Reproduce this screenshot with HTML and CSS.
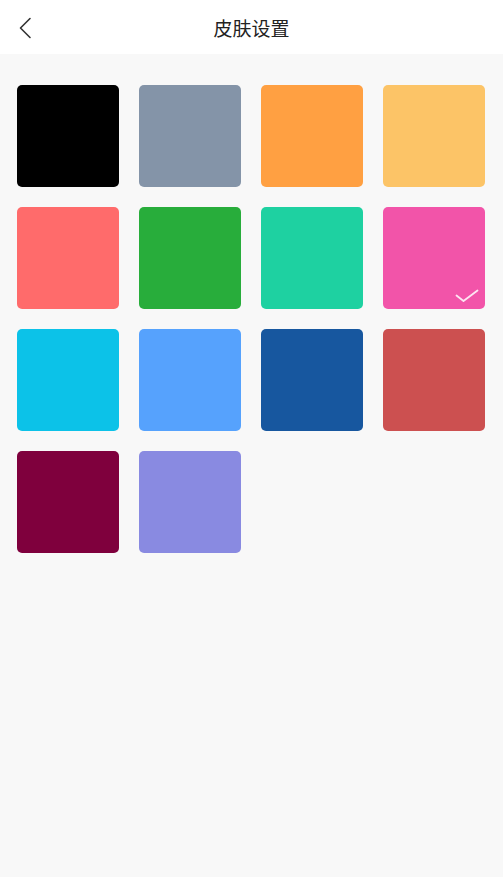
FILE: index.html
```html
<!DOCTYPE html>
<html lang="zh-CN">
<head>
    <meta charset="UTF-8">
    <meta name="viewport" content="width=device-width, initial-scale=1.0">
    <title>皮肤设置</title>
    <link rel="stylesheet" href="styles.css">
</head>
<body>
    <div class="navbar">
        <a href="#" class="back">
            <svg width="14" height="22" viewBox="0 0 14 22">
                <path d="M12 1.5 L2.5 11 L12 20.5" fill="none" stroke="#333" stroke-width="1.6" stroke-linecap="round" stroke-linejoin="round"/>
            </svg>
        </a>
        <h1>皮肤设置</h1>
    </div>

    <div class="container">
        <div class="skins">
            <div class="skin black"></div>
            <div class="skin slate"></div>
            <div class="skin orange"></div>
            <div class="skin sand"></div>
            <div class="skin coral"></div>
            <div class="skin green"></div>
            <div class="skin teal"></div>
            <div class="skin pink active">
                <svg class="check" width="24" height="14" viewBox="0 0 24 14">
                    <path d="M1.5 6.5 L8.5 12 L22.5 1.5" fill="none" stroke="rgba(255,255,255,0.85)" stroke-width="1.8" stroke-linecap="round" stroke-linejoin="round"/>
                </svg>
            </div>
            <div class="skin cyan"></div>
            <div class="skin sky"></div>
            <div class="skin navy"></div>
            <div class="skin brick"></div>
            <div class="skin wine"></div>
            <div class="skin lavender"></div>
        </div>
    </div>
</body>
</html>
```

FILE: styles.css
```css
body {
    font-family: "Noto Sans CJK SC", "Noto Sans", sans-serif;
    background-color: #f8f8f8;
    margin: 0;
    color: #222;
}

.navbar {
    background-color: #fff;
    height: 54px;
    display: flex;
    align-items: center;
    justify-content: center;
    position: relative;
}

.navbar h1 {
    margin: 0;
    font-size: 19px;
    font-weight: normal;
    color: #222;
}

.back {
    position: absolute;
    left: 18px;
    top: 17px;
    display: flex;
}

.container {
    padding: 31px 18px 0 17px;
}

.skins {
    display: grid;
    grid-template-columns: repeat(4, 102px);
    column-gap: 20px;
    row-gap: 20px;
}

.skin {
    height: 102px;
    border-radius: 5px;
    position: relative;
}

.check {
    position: absolute;
    right: 6px;
    bottom: 6px;
}

.black { background-color: #000; }
.slate { background-color: #8494a8; }
.orange { background-color: #ffa042; }
.sand { background-color: #fcc467; }
.coral { background-color: #ff6b6b; }
.green { background-color: #28ad3b; }
.teal { background-color: #1ed1a1; }
.pink { background-color: #f254a9; }
.cyan { background-color: #0cc2e8; }
.sky { background-color: #56a2fd; }
.navy { background-color: #17579f; }
.brick { background-color: #cc5050; }
.wine { background-color: #7f003d; }
.lavender { background-color: #898ae1; }
```
